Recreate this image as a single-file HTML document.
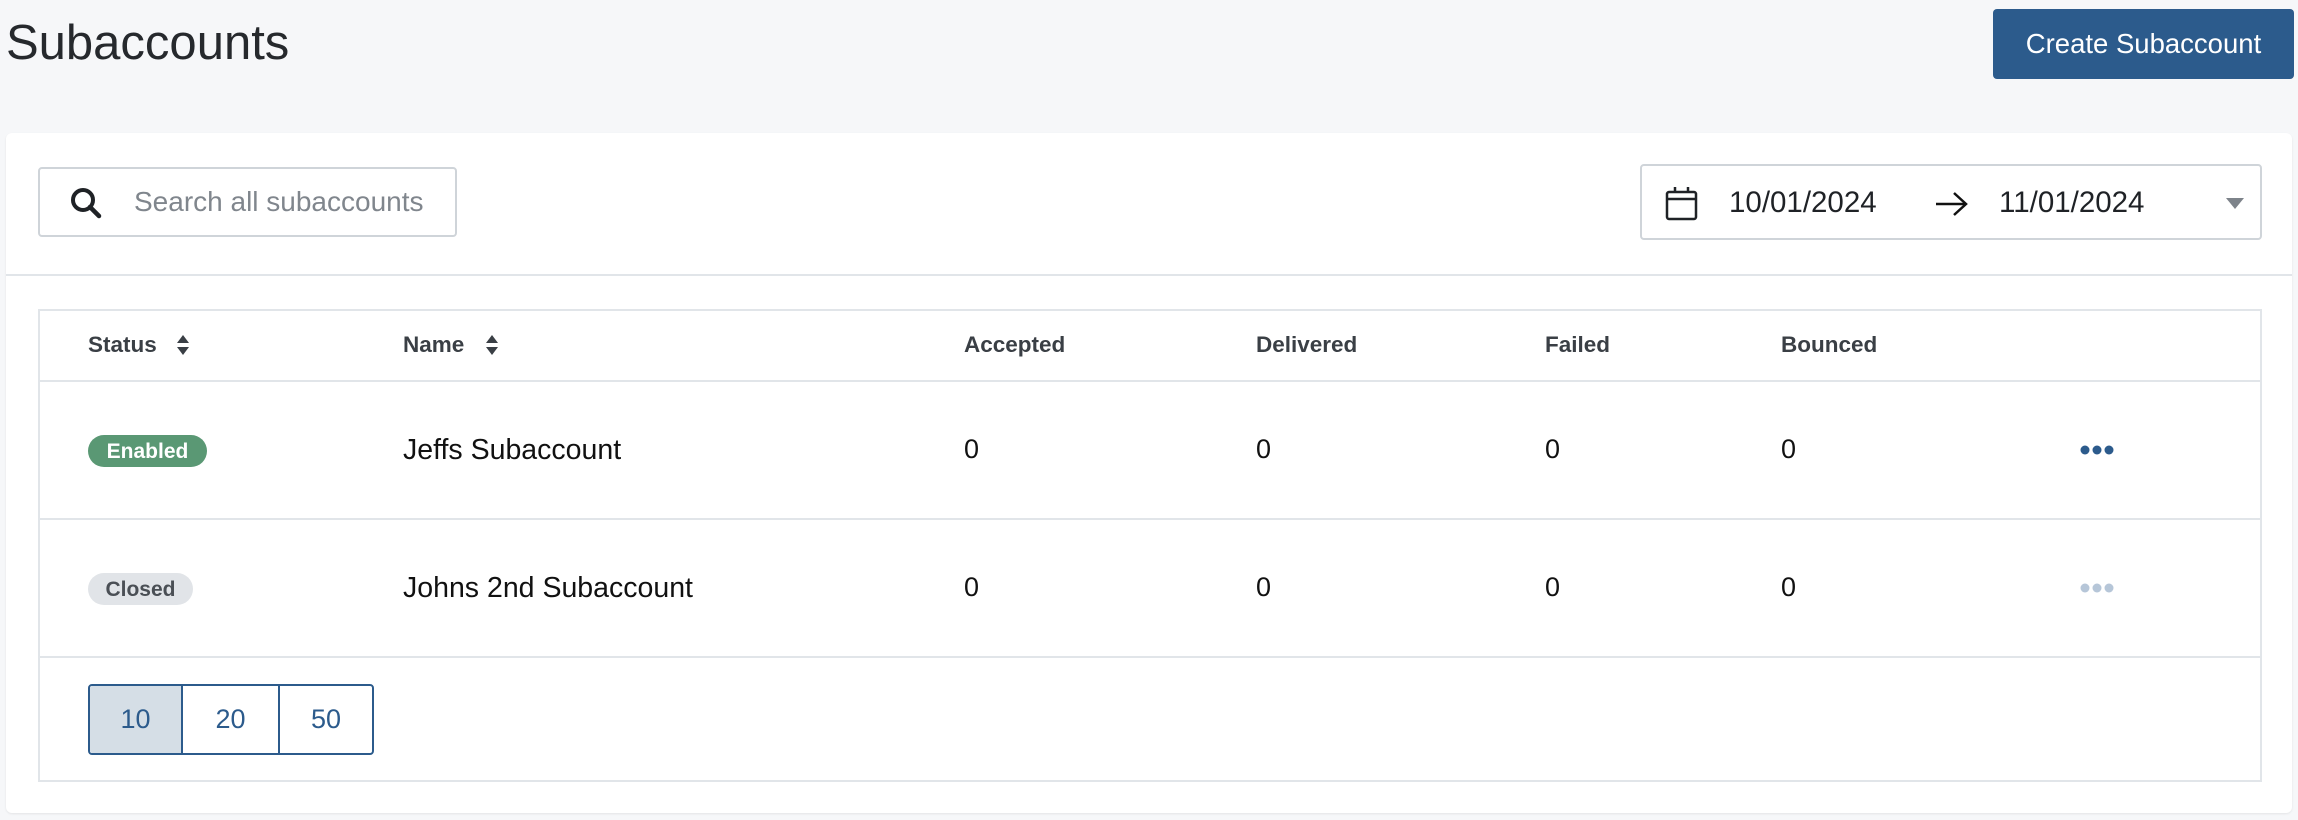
<!DOCTYPE html>
<html><head><style>
*{box-sizing:border-box;margin:0;padding:0}
body{width:2298px;height:820px;background:#f6f7f9;font-family:"Liberation Sans",sans-serif;position:relative;overflow:hidden;color:#111}
.a{position:absolute}
.t{white-space:nowrap;line-height:1}
</style></head><body>
<div class="a t" style="left:6px;top:19px;font-size:49px;color:#26292d">Subaccounts</div>
<div class="a" style="left:1993px;top:9px;width:301px;height:70px;background:#2c5b8c;border-radius:4px;color:#fff;font-size:27.5px;display:flex;align-items:center;justify-content:center">Create Subaccount</div>

<div class="a" style="left:6px;top:133px;width:2286px;height:680px;background:#fff;border-radius:6px;box-shadow:0 1px 2px rgba(0,0,0,.08)"></div>

<div class="a" style="left:38px;top:167px;width:419px;height:70px;border:2px solid #cfd4d9;border-radius:4px"></div>
<svg class="a" style="left:68px;top:185px" width="36" height="36" viewBox="0 0 36 36"><circle cx="15" cy="15" r="10" fill="none" stroke="#1f2226" stroke-width="4"/><line x1="22" y1="22" x2="31" y2="31" stroke="#1f2226" stroke-width="4.5" stroke-linecap="round"/></svg>
<div class="a t" style="left:134px;top:188px;font-size:28px;color:#80868d">Search all subaccounts</div>

<div class="a" style="left:1640px;top:164px;width:622px;height:76px;border:2px solid #cfd4d9;border-radius:4px"></div>
<svg class="a" style="left:1665px;top:186px" width="34" height="36" viewBox="0 0 34 36"><rect x="2" y="6" width="29" height="27" rx="2" fill="none" stroke="#1f2226" stroke-width="2.5"/><line x1="2" y1="13" x2="31" y2="13" stroke="#1f2226" stroke-width="2.5"/><line x1="10" y1="1" x2="10" y2="7" stroke="#1f2226" stroke-width="2.5"/><line x1="23" y1="1" x2="23" y2="7" stroke="#1f2226" stroke-width="2.5"/></svg>
<div class="a t" style="left:1729px;top:188px;font-size:29.5px;color:#1f2226">10/01/2024</div>
<svg class="a" style="left:1935px;top:191px" width="34" height="26" viewBox="0 0 34 26"><line x1="1" y1="13" x2="31" y2="13" stroke="#111" stroke-width="2.5"/><polyline points="19,2 31,13 19,24" fill="none" stroke="#111" stroke-width="2.5"/></svg>
<div class="a t" style="left:1999px;top:188px;font-size:29.5px;color:#1f2226">11/01/2024</div>
<svg class="a" style="left:2226px;top:198px" width="18" height="12"><polygon points="0,0 18,0 9,11" fill="#7d838a"/></svg>

<div class="a" style="left:6px;top:274px;width:2286px;height:2px;background:#e1e5e9"></div>

<div class="a" style="left:38px;top:309px;width:2224px;height:473px;border:2px solid #e1e5e9"></div>
<div class="a" style="left:38px;top:380px;width:2224px;height:2px;background:#e1e5e9"></div>
<div class="a" style="left:38px;top:518px;width:2224px;height:2px;background:#e1e5e9"></div>
<div class="a" style="left:38px;top:656px;width:2224px;height:2px;background:#e1e5e9"></div>

<div class="a t" style="left:88px;top:334px;font-size:22.5px;font-weight:bold;color:#3a3f45">Status</div>
<svg class="a" style="left:176px;top:334px" width="14" height="22"><polygon points="7,1 13,9 1,9" fill="#3a3f45"/><polygon points="1,13 13,13 7,21" fill="#3a3f45"/></svg>
<div class="a t" style="left:403px;top:334px;font-size:22.5px;font-weight:bold;color:#3a3f45">Name</div>
<svg class="a" style="left:485px;top:334px" width="14" height="22"><polygon points="7,1 13,9 1,9" fill="#3a3f45"/><polygon points="1,13 13,13 7,21" fill="#3a3f45"/></svg>
<div class="a t" style="left:964px;top:334px;font-size:22.5px;font-weight:bold;color:#3a3f45">Accepted</div>
<div class="a t" style="left:1256px;top:334px;font-size:22.5px;font-weight:bold;color:#3a3f45">Delivered</div>
<div class="a t" style="left:1545px;top:334px;font-size:22.5px;font-weight:bold;color:#3a3f45">Failed</div>
<div class="a t" style="left:1781px;top:334px;font-size:22.5px;font-weight:bold;color:#3a3f45">Bounced</div>

<div class="a t" style="left:88px;top:435px;width:119px;height:32px;border-radius:16px;background:#5a9874;color:#fff;font-size:21px;font-weight:bold;display:flex;align-items:center;justify-content:center">Enabled</div>
<div class="a t" style="left:403px;top:436px;font-size:28.5px">Jeffs Subaccount</div>
<div class="a t" style="left:964px;top:436px;font-size:27px">0</div>
<div class="a t" style="left:1256px;top:436px;font-size:27px">0</div>
<div class="a t" style="left:1545px;top:436px;font-size:27px">0</div>
<div class="a t" style="left:1781px;top:436px;font-size:27px">0</div>
<svg class="a" style="left:2080px;top:443px" width="34" height="14"><circle cx="5" cy="7" r="4.5" fill="#2c5b8c"/><circle cx="17" cy="7" r="4.5" fill="#2c5b8c"/><circle cx="29" cy="7" r="4.5" fill="#2c5b8c"/></svg>

<div class="a t" style="left:88px;top:573px;width:105px;height:32px;border-radius:16px;background:#e1e4e8;color:#4a4f55;font-size:21px;font-weight:bold;display:flex;align-items:center;justify-content:center">Closed</div>
<div class="a t" style="left:403px;top:574px;font-size:28.5px">Johns 2nd Subaccount</div>
<div class="a t" style="left:964px;top:574px;font-size:27px">0</div>
<div class="a t" style="left:1256px;top:574px;font-size:27px">0</div>
<div class="a t" style="left:1545px;top:574px;font-size:27px">0</div>
<div class="a t" style="left:1781px;top:574px;font-size:27px">0</div>
<svg class="a" style="left:2080px;top:581px" width="34" height="14"><circle cx="5" cy="7" r="4.5" fill="#b6c6d8"/><circle cx="17" cy="7" r="4.5" fill="#b6c6d8"/><circle cx="29" cy="7" r="4.5" fill="#b6c6d8"/></svg>

<div class="a" style="left:88px;top:684px;width:286px;height:71px;border:2px solid #2c5b8c;border-radius:4px;display:flex;overflow:hidden">
<div style="width:93px;background:#d5dee6;border-right:2px solid #2c5b8c;display:flex;align-items:center;justify-content:center;font-size:27px;color:#2c5b8c">10</div>
<div style="width:97px;border-right:2px solid #2c5b8c;display:flex;align-items:center;justify-content:center;font-size:27px;color:#2c5b8c">20</div>
<div style="flex:1;display:flex;align-items:center;justify-content:center;font-size:27px;color:#2c5b8c">50</div>
</div>
</body></html>
